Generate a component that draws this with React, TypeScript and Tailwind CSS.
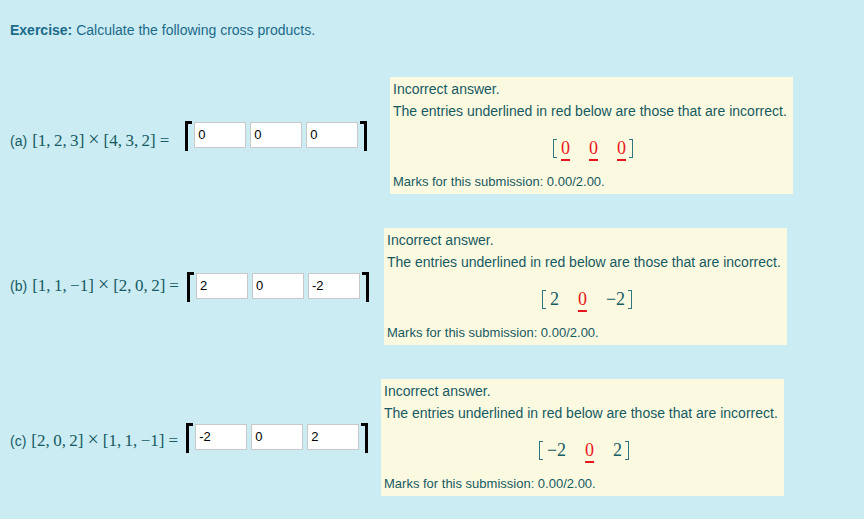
const ROWS = [
  {
    key: "a",
    u: "1,\u20092,\u20093",
    v: "4,\u20093,\u20092",
    inputs: ["0", "0", "0"],
    correct: [false, false, false],
    shown: ["0", "0", "0"],
    leftWidth: "w-[390px]",
    bracketGap: "ml-[16px]",
    textShift: "mt-[9px]",
  },
  {
    key: "b",
    u: "1,\u20091,\u2009−1",
    v: "2,\u20090,\u20092",
    inputs: ["2", "0", "-2"],
    correct: [true, false, true],
    shown: ["2", "0", "−2"],
    leftWidth: "w-[384px]",
    bracketGap: "ml-[8px]",
    textShift: "mb-[4px]",
  },
  {
    key: "c",
    u: "2,\u20090,\u20092",
    v: "1,\u20091,\u2009−1",
    inputs: ["-2", "0", "2"],
    correct: [true, false, true],
    shown: ["−2", "0", "2"],
    leftWidth: "w-[381px]",
    bracketGap: "ml-[8px]",
    textShift: "mt-[5px]",
  },
];

const sans = { fontFamily: '"Liberation Sans", Arial, sans-serif' };
const serif = { fontFamily: '"Liberation Serif", "Times New Roman", serif' };

function Feedback({ shown, correct }: { shown: string[]; correct: boolean[] }) {
  return (
    <div className="w-[403px] h-[117px] bg-[#fcf9e1] pl-[3px] pt-[3px] text-[#165a62] text-[14px]">
      <div className="leading-[18px]">Incorrect answer.</div>
      <div className="leading-[18px] mt-[4px]">
        The entries underlined in red below are those that are incorrect.
      </div>
      <div className="flex justify-center items-center h-[26px] mt-[15px]" style={serif}>
        <span className="w-[4px] h-[19px] border-l border-t border-b border-[#2f7680] mr-[4px]" />
        <div className="flex items-center gap-[19px] text-[18px] leading-[22px]">
          {shown.map((v, i) => (
            <span
              key={i}
              className={
                correct[i]
                  ? "text-[#165a62]"
                  : "text-[#e8161c] underline decoration-[#e8161c] decoration-[1.5px] underline-offset-[5px]"
              }
            >
              {v}
            </span>
          ))}
        </div>
        <span className="w-[4px] h-[19px] border-r border-t border-b border-[#2f7680] ml-[3px]" />
      </div>
      <div className="leading-[18px] mt-[12px] text-[13px]">Marks for this submission: 0.00/2.00.</div>
    </div>
  );
}

export default function App() {
  return (
    <div className="w-[864px] h-[519px] bg-[#cbecf2] overflow-hidden" style={sans}>
      <div className="pl-[10px] pt-[21px] leading-[18px] text-[14px] text-[#1b6a8a]">
        <span className="font-bold">Exercise:</span> Calculate the following cross products.
      </div>
      <div className="flex flex-col gap-[34px] mt-[38px]">
        {ROWS.map((row) => (
          <div key={row.key} className="flex items-center">
            <div className={`${row.leftWidth} pl-[10px] flex items-center shrink-0`}>
              <div className={`${row.textShift} flex items-baseline text-[#165a62] leading-[20px]`}>
                <span className="text-[14px] mr-[5px]">({row.key})</span>
                <span className="text-[17px] whitespace-pre" style={serif}>
                  [{row.u}]
                </span>
                <span className="text-[20px] mx-[4px]" style={serif}>
                  ×
                </span>
                <span className="text-[17px] whitespace-pre" style={serif}>
                  [{row.v}]
                </span>
                <span className="text-[17px] ml-[4px]" style={serif}>
                  =
                </span>
              </div>
              <div className={`${row.bracketGap} flex items-start`}>
                <span className="w-[7px] h-[30px] border-l-[3px] border-t-[3px] border-black" />
                <div className="flex gap-[4px] mt-[1px] ml-[2px]">
                  {row.inputs.map((v, i) => (
                    <div
                      key={i}
                      className="w-[52px] h-[26px] bg-white border border-[#c9c9c9] pl-[3px] text-[13px] leading-[24px] text-black"
                    >
                      {v}
                    </div>
                  ))}
                </div>
                <span className="w-[7px] h-[30px] border-r-[3px] border-t-[3px] border-black ml-[2px]" />
              </div>
            </div>
            <Feedback shown={row.shown} correct={row.correct} />
          </div>
        ))}
      </div>
    </div>
  );
}
